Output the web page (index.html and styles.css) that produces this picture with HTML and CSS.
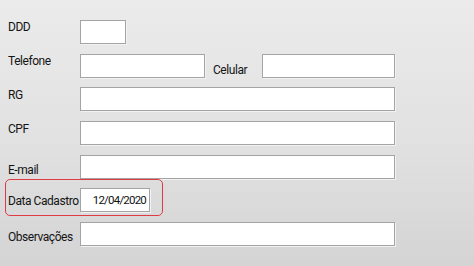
FILE: index.html
```html
<!DOCTYPE html>
<html>
<head>
<meta charset="utf-8">
<link rel="stylesheet" href="styles.css">
</head>
<body>
<div class="form">
  <div class="row">
    <span class="lbl off-0">DDD</span>
    <div class="field w-ddd"></div>
  </div>
  <div class="row">
    <span class="lbl off-0">Telefone</span>
    <div class="field w-tel"></div>
    <span class="lbl lbl-cel off-9">Celular</span>
    <div class="field w-cel"></div>
  </div>
  <div class="row">
    <span class="lbl off-1">RG</span>
    <div class="field w-full"></div>
  </div>
  <div class="row">
    <span class="lbl off-1">CPF</span>
    <div class="field w-full"></div>
  </div>
  <div class="row">
    <span class="lbl off-8">E-mail</span>
    <div class="field w-full"></div>
  </div>
  <div class="row">
    <span class="lbl off-6">Data Cadastro</span>
    <div class="field w-date">12/04/2020</div>
    <div class="highlight"></div>
  </div>
  <div class="row">
    <span class="lbl off-8">Observações</span>
    <div class="field w-full"></div>
  </div>
</div>
</body>
</html>
```
FILE: styles.css
```css
html, body {
  margin: 0;
  padding: 0;
  height: 100%;
}
body {
  width: 474px;
  height: 266px;
  overflow: hidden;
  background: linear-gradient(to bottom, #ebebeb 0%, #e2e2e2 50%, #d4d4d4 100%);
  font-family: Roboto, "Liberation Sans", sans-serif;
  font-size: 12px;
  letter-spacing: -0.45px;
  color: #141414;
}
.form {
  display: flex;
  flex-direction: column;
  gap: 9.67px;
  padding: 20px 0 0 8px;
}
.row {
  display: flex;
  align-items: flex-start;
  height: 24px;
  position: relative;
}
.lbl {
  width: 72px;
  flex: none;
  line-height: 14px;
  white-space: nowrap;
}
.lbl-cel {
  width: 49px;
  margin-left: 8px;
}
.off-0 { padding-top: 0; }
.off-1 { padding-top: 1px; }
.off-6 { padding-top: 6px; }
.off-8 { padding-top: 8px; }
.off-9 { padding-top: 9px; }
.field {
  box-sizing: border-box;
  height: 24px;
  flex: none;
  background: #ffffff;
  border: 1px solid #a4a4a4;
  box-shadow: 1px 1px 0 #f2f2f2;
}
.w-ddd { width: 46px; }
.w-tel { width: 125px; }
.w-cel { width: 133px; }
.w-full { width: 315px; }
.w-date {
  width: 70px;
  text-align: right;
  padding-right: 3px;
  font-size: 11.5px;
  letter-spacing: -0.8px;
  line-height: 22px;
  color: #111;
}
.highlight {
  position: absolute;
  left: -3px;
  top: -9px;
  width: 158px;
  height: 37px;
  box-sizing: border-box;
  border: 1.5px solid #df3b47;
  border-radius: 5px;
  pointer-events: none;
}
```
